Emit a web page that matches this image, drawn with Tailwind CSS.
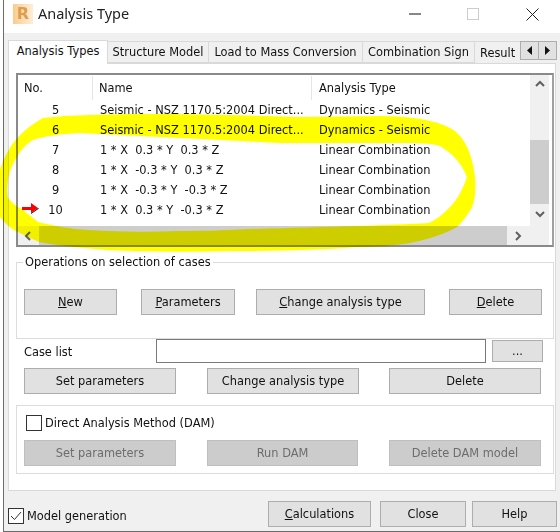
<!DOCTYPE html>
<html lang="en">
<head>
<meta charset="UTF-8">
<title>Analysis Type</title>
<script src="https://cdn.jsdelivr.net/npm/@tailwindcss/browser@4"></script>
</head>
<body class="bg-white">
<div class="relative w-[560px] h-[532px] overflow-hidden bg-white font-['DejaVu_Sans',sans-serif] text-[11.4px] text-[#111]">

  <!-- window -->
  <div class="ml-[3px] w-[557px] h-[532px] border-l border-b border-[#6b6b6b] flex flex-col">

    <!-- title bar -->
    <div class="h-[33px] shrink-0 bg-white flex items-center pb-[5px]">
      <div class="ml-[9px] w-5 h-5 bg-linear-to-r from-[#fbcb8c] to-[#fdeed9] flex items-center justify-center text-[#dc9f4e] font-bold text-[16px] leading-none">R</div>
      <span class="ml-[5px] text-[14.5px] font-['Noto_Sans',sans-serif] text-[#222]">Analysis Type</span>
      <div class="ml-auto flex items-center">
        <svg class="w-[12px] h-[12px]" viewBox="0 0 12 12"><path d="M0 6h12" stroke="#111" stroke-width="1"/></svg>
        <div class="ml-[46px] w-3 h-3 border border-[#ccc]"></div>
        <svg class="ml-[47px] mr-[21px] w-[13px] h-[13px]" viewBox="0 0 13 13"><path d="M.5.5l12 12M12.5.5l-12 12" stroke="#222" stroke-width="1" fill="none"/></svg>
      </div>
    </div>

    <!-- dialog body -->
    <div class="flex-1 bg-[#f0f0f0] pl-[4px] flex flex-col">

      <!-- tabs -->
      <div class="h-[30px] flex items-end relative">
        <div class="w-[100px] h-[24px] pb-[2px] bg-white border border-b-0 border-[#d9d9d9] flex items-center justify-center relative top-px z-10">Analysis Types</div>
        <div class="w-[101px] h-[22px] pt-[2px] border border-l-0 border-[#d9d9d9] flex items-center justify-center">Structure Model</div>
        <div class="w-[154px] h-[22px] pt-[2px] border border-l-0 border-[#d9d9d9] flex items-center justify-center">Load to Mass Conversion</div>
        <div class="w-[112px] h-[22px] pt-[2px] border border-l-0 border-[#d9d9d9] flex items-center justify-center">Combination Sign</div>
        <div class="w-[46px] h-[22px] pt-[2px] border-t border-[#d9d9d9] pl-[5px] flex items-center overflow-hidden whitespace-nowrap">Result</div>
        <div class="absolute right-[3px] top-[8px] flex">
          <div class="w-[19px] h-[19px] bg-[#e1e1e1] border border-[#adadad] flex items-center justify-center"><svg class="w-[5px] h-[9px]" viewBox="0 0 5 9"><path d="M5 0v9L0 4.500z" fill="#111"/></svg></div>
          <div class="w-[18px] h-[19px] bg-[#e1e1e1] border border-l-0 border-[#adadad] flex items-center justify-center"><svg class="w-[5px] h-[9px]" viewBox="0 0 5 9"><path d="M0 0v9l5-4.500z" fill="#111"/></svg></div>
        </div>
      </div>

      <!-- tab panel -->
      <div class="w-[548px] h-[428px] bg-white border border-[#d9d9d9] pl-[7px] pt-[9px]">

        <!-- list box -->
        <div class="w-[538px] h-[174px] border-2 border-[#8a8a8a] border-r-[#a0a0a0] flex flex-col">
          <div class="flex h-[151px]">
            <div class="flex-1 bg-white">
              <div class="grid grid-cols-[75px_219px_1fr] h-[26px] items-center">
                <div class="pl-[6px] pt-[1px] h-6 flex items-center border-r border-[#e5e5e5]">No.</div>
                <div class="pl-[6px] pt-[1px] h-6 flex items-center border-r border-[#e5e5e5]">Name</div>
                <div class="pl-[7px] pt-[1px] h-6 flex items-center">Analysis Type</div>
              </div>
              <div class="grid grid-cols-[75px_219px_1fr] h-5 items-center"><div class="text-center">5</div><div class="pl-[7px]">Seismic - NSZ 1170.5:2004 Direct...</div><div class="pl-[7px]">Dynamics - Seismic</div></div>
              <div class="grid grid-cols-[75px_219px_1fr] h-5 items-center"><div class="text-center">6</div><div class="pl-[7px]">Seismic - NSZ 1170.5:2004 Direct...</div><div class="pl-[7px]">Dynamics - Seismic</div></div>
              <div class="grid grid-cols-[75px_219px_1fr] h-5 items-center"><div class="text-center">7</div><div class="pl-[7px]">1 * X&nbsp; 0.3 * Y&nbsp; 0.3 * Z</div><div class="pl-[7px]">Linear Combination</div></div>
              <div class="grid grid-cols-[75px_219px_1fr] h-5 items-center"><div class="text-center">8</div><div class="pl-[7px]">1 * X&nbsp; -0.3 * Y&nbsp; 0.3 * Z</div><div class="pl-[7px]">Linear Combination</div></div>
              <div class="grid grid-cols-[75px_219px_1fr] h-5 items-center"><div class="text-center">9</div><div class="pl-[7px]">1 * X&nbsp; -0.3 * Y&nbsp; -0.3 * Z</div><div class="pl-[7px]">Linear Combination</div></div>
              <div class="grid grid-cols-[75px_219px_1fr] h-5 items-center">
                <div class="text-center relative">10
                  <svg class="absolute left-[4px] top-[1px] w-[17px] h-[11px]" viewBox="0 0 17 11"><path d="M9 11l8-5.500-1-.5-7 5z" fill="#300"/><path d="M0 4h9V0l7 5-7 5V7H0z" fill="#f00"/></svg>
                </div>
                <div class="pl-[7px]">1 * X&nbsp; 0.3 * Y&nbsp; -0.3 * Z</div><div class="pl-[7px]">Linear Combination</div>
              </div>
            </div>
            <!-- vertical scrollbar -->
            <div class="w-[19px] mr-[3px] bg-[#f0f0f0] flex flex-col items-center">
              <svg class="mt-[5px] w-[10px] h-[7px]" viewBox="0 0 10 7"><path d="M1 6l4-4 4 4" stroke="#606060" stroke-width="2" fill="none"/></svg>
              <div class="mt-[53px] w-[19px] h-[64px] bg-[#cdcdcd]"></div>
              <svg class="mt-[7px] w-[10px] h-[7px]" viewBox="0 0 10 7"><path d="M1 1l4 4 4-4" stroke="#606060" stroke-width="2" fill="none"/></svg>
            </div>
          </div>
          <!-- horizontal scrollbar -->
          <div class="h-[19px] mr-[3px] bg-[#f0f0f0] flex items-center">
            <svg class="ml-[6px] w-[7px] h-[10px]" viewBox="0 0 7 10"><path d="M6 1L2 5l4 4" stroke="#606060" stroke-width="2" fill="none"/></svg>
            <div class="ml-[8px] w-[468px] h-[19px] bg-[#cdcdcd]"></div>
            <svg class="ml-[8px] w-[7px] h-[10px]" viewBox="0 0 7 10"><path d="M1 1l4 4-4 4" stroke="#606060" stroke-width="2" fill="none"/></svg>
          </div>
        </div>

        <!-- operations group -->
        <div class="relative mt-[15px] w-[538px] h-[77px] border border-[#dcdcdc] pl-[7px] pt-[26px] flex">
          <span class="absolute left-[6px] -top-[8px] bg-white px-[2px] leading-[14px]">Operations on selection of cases</span>
          <button class="w-[93px] h-[26px] pt-[2px] bg-[#e1e1e1] border border-[#adadad]"><u>N</u>ew</button>
          <button class="ml-[24px] w-[94px] h-[26px] pt-[2px] bg-[#e1e1e1] border border-[#adadad]"><u>P</u>arameters</button>
          <button class="ml-[21px] w-[169px] h-[26px] pt-[2px] bg-[#e1e1e1] border border-[#adadad]"><u>C</u>hange analysis type</button>
          <button class="ml-[24px] w-[93px] h-[26px] pt-[2px] bg-[#e1e1e1] border border-[#adadad]"><u>D</u>elete</button>
        </div>

        <!-- case list -->
        <div class="flex items-center h-[24px] pl-[8px]">
          <span class="w-[132px] pt-[3px]">Case list</span>
          <div class="w-[330px] h-[24px] border border-[#7a7a7a] bg-white"></div>
          <button class="ml-[6px] w-[51px] h-[22px] pt-[2px] bg-[#e1e1e1] border border-[#adadad]">...</button>
        </div>

        <div class="flex mt-[5px] ml-[8px]">
          <button class="w-[152px] h-[26px] pt-[2px] bg-[#e1e1e1] border border-[#adadad]">Set parameters</button>
          <button class="ml-[31px] w-[152px] h-[26px] pt-[2px] bg-[#e1e1e1] border border-[#adadad]">Change analysis type</button>
          <button class="ml-[30px] w-[152px] h-[26px] pt-[2px] bg-[#e1e1e1] border border-[#adadad]">Delete</button>
        </div>

        <!-- DAM group -->
        <div class="mt-[11px] w-[538px] h-[69px] border border-[#dcdcdc] pl-[7px] pt-[9px]">
          <label class="flex items-center h-4 ml-[2px]">
            <span class="w-4 h-4 border border-[#333] bg-white"></span>
            <span class="ml-[3px] pt-[1px]">Direct Analysis Method (DAM)</span>
          </label>
          <div class="flex mt-[9px]">
            <button class="w-[152px] h-[26px] pt-[2px] bg-[#cccccc] border border-[#bfbfbf] text-[#6d6d6d]">Set parameters</button>
            <button class="ml-[31px] w-[151px] h-[26px] pt-[2px] bg-[#cccccc] border border-[#bfbfbf] text-[#6d6d6d]">Run DAM</button>
            <button class="ml-[31px] w-[152px] h-[26px] pt-[2px] bg-[#cccccc] border border-[#bfbfbf] text-[#6d6d6d]">Delete DAM model</button>
          </div>
        </div>
      </div>

      <!-- footer -->
      <div class="flex items-center h-[39px] pt-[6px]">
        <label class="flex items-center h-4 mt-[5px]">
          <span class="w-4 h-4 border border-[#333] bg-white flex items-center justify-center">
            <svg class="w-3 h-3" viewBox="0 0 12 12"><path d="M1 6l3.500 3.500L11 2" stroke="#333" stroke-width="1" fill="none"/></svg>
          </span>
          <span class="ml-[3px] pt-[2px]">Model generation</span>
        </label>
        <div class="ml-auto mr-[3px] flex">
          <button class="w-[103px] h-[26px] pt-[2px] bg-[#e1e1e1] border border-[#adadad]"><u>C</u>alculations</button>
          <button class="ml-[9px] w-[86px] h-[26px] pt-[2px] bg-[#e1e1e1] border border-[#adadad]">Close</button>
          <button class="ml-[6px] w-[85px] h-[26px] pt-[2px] bg-[#e1e1e1] border border-[#adadad]">Help</button>
        </div>
      </div>
    </div>
  </div>

  <!-- yellow marker over the screenshot -->
  <svg class="absolute inset-0 w-[560px] h-[532px] mix-blend-multiply pointer-events-none" viewBox="0 0 560 532">
    <path fill="#ffff00" fill-rule="evenodd" d="M0 170C6 150 18 132 43 118C100 112 200 114 297 117L380 116C410 116 435 120 450 128C462 134 472 150 475 177C476 190 475 200 472 207C466 218 460 224 457 227C440 236 425 240 410 243C390 246 375 247 357 247C320 250 280 251 232 251C190 252 150 252 107 250C85 248 60 246 39 242C30 238 22 234 14 230C8 226 4 222 0 217Z M80 133C60 134 45 136 33 140C26 144 21 150 17 157C12 165 9 172 8 180C7 188 7 194 8 198C12 203 17 207 23 210C28 214 33 218 38 222C55 226 70 229 89 230C120 232 150 232 179 231C205 231 230 230 250 229C290 228 325 227 357 226C385 225 410 224 429 223C437 219 442 215 446 211C455 203 462 192 467 177C462 165 455 155 440 146C430 143 420 143 400 143L280 143Z"/>
  </svg>
</div>
</body>
</html>
